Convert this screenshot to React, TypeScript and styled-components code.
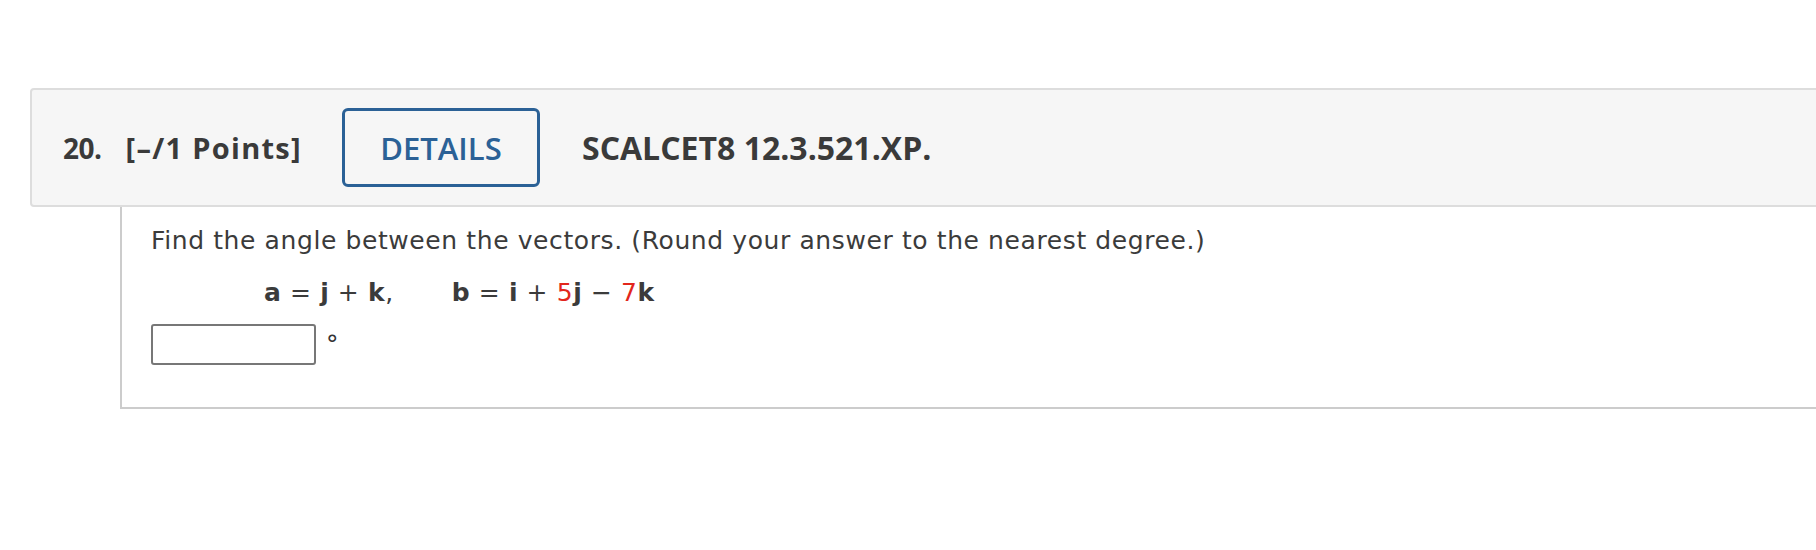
import React from "react";
import styled, { createGlobalStyle } from "styled-components";

const GlobalStyle = createGlobalStyle`
  html, body {
    margin: 0;
    padding: 0;
    background: #ffffff;
    overflow: hidden;
  }
  body {
    font-family: "DejaVu Sans", Verdana, sans-serif;
  }
`;

const Page = styled.div`
  padding: 88px 0 0 30px;
  width: 1900px;
`;

const Header = styled.div`
  display: flex;
  align-items: center;
  height: 115px;
  padding-left: 31px;
  background: #f6f6f6;
  border: 2px solid #dddddd;
  border-radius: 4px;
  font-family: "Open Sans", "Liberation Sans", sans-serif;
  color: #3a3a3a;
`;

const Number = styled.span`
  font-size: 28px;
  font-weight: 700;
  letter-spacing: -0.5px;
  margin-right: 24px;
`;

const Points = styled.span`
  font-size: 29px;
  font-weight: 700;
  letter-spacing: 1.3px;
  margin-right: 40px;
`;

const DetailsButton = styled.button`
  box-sizing: border-box;
  width: 198px;
  height: 79px;
  border: 3px solid #2b6196;
  border-radius: 6px;
  background: transparent;
  font-family: "Open Sans", "Liberation Sans", sans-serif;
  font-size: 31px;
  font-weight: 600;
  color: #2b6196;
  padding: 0;
  margin-right: 42px;
  cursor: pointer;
`;

const Code = styled.span`
  font-size: 32px;
  font-weight: 700;
`;

const Body = styled.div`
  margin-left: 90px;
  padding: 20px 0 42px 29px;
  border-left: 2px solid #cccccc;
  border-bottom: 2px solid #cccccc;
  color: #3b3b3b;
  font-size: 25px;
  letter-spacing: 0.6px;
  line-height: 28px;
`;

const Prompt = styled.p`
  margin: 0;
`;

const MathLine = styled.div`
  margin: 24px 0 17px 113px;
  white-space: pre;
`;

const V = styled.b`
  font-weight: 700;
`;

const Coef = styled.span`
  color: #e2261c;
`;

const Gap = styled.span`
  display: inline-block;
  width: 58px;
`;

const AnswerRow = styled.div`
  display: flex;
  align-items: center;
`;

const AnswerInput = styled.input`
  box-sizing: border-box;
  width: 165px;
  height: 41px;
  border: 2px solid #777777;
  border-radius: 3px;
  background: #ffffff;
  font-size: 20px;
  padding: 0 6px;
  outline: none;
`;

const Unit = styled.span`
  margin-left: 10px;
  color: #333333;
`;

export default function App() {
  return (
    <>
      <GlobalStyle />
      <Page>
        <Header>
          <Number>20.</Number>
          <Points>[–/1 Points]</Points>
          <DetailsButton>DETAILS</DetailsButton>
          <Code>SCALCET8 12.3.521.XP.</Code>
        </Header>
        <Body>
          <Prompt>
            Find the angle between the vectors. (Round your answer to the
            nearest degree.)
          </Prompt>
          <MathLine>
            <V>a</V> = <V>j</V> + <V>k</V>,<Gap />
            <V>b</V> = <V>i</V> + <Coef>5</Coef>
            <V>j</V> − <Coef>7</Coef>
            <V>k</V>
          </MathLine>
          <AnswerRow>
            <AnswerInput type="text" />
            <Unit>°</Unit>
          </AnswerRow>
        </Body>
      </Page>
    </>
  );
}
